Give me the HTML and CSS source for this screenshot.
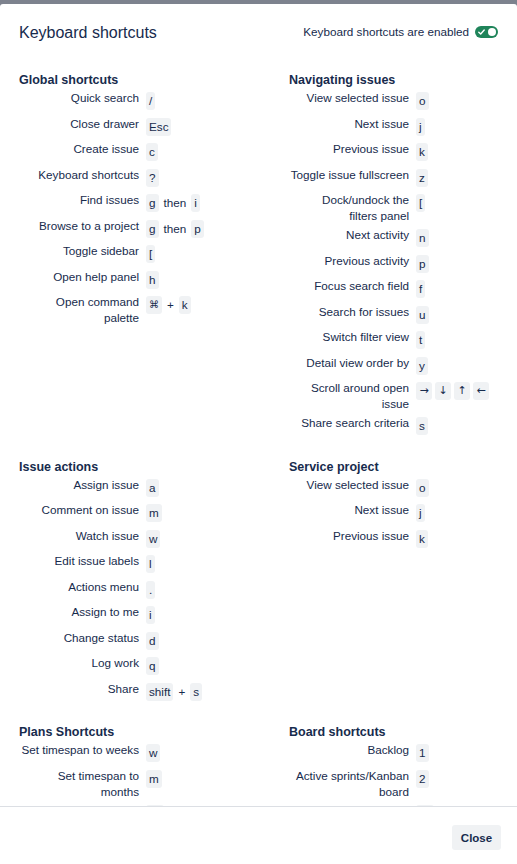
FILE: index.html
```html
<!DOCTYPE html>
<html lang="en">
<head>
<meta charset="utf-8">
<title>Keyboard shortcuts</title>
<link rel="stylesheet" href="styles.css">
</head>
<body>
<div class="modal">
  <header class="modal-header">
    <h1 class="title">Keyboard shortcuts</h1>
    <div class="toggle-wrap">
      <span class="toggle-label">Keyboard shortcuts are enabled</span>
      <span class="toggle">
        <svg class="toggle-check" width="7" height="6" viewBox="0 0 7 6"><path d="M0.8 3.2 L2.7 5 L6.2 1" fill="none" stroke="#fff" stroke-width="1.4" stroke-linecap="round" stroke-linejoin="round"/></svg>
        <span class="knob"></span>
      </span>
    </div>
  </header>
  <div class="modal-body">
    <div class="grid">
      <section class="section">
        <h2>Global shortcuts</h2>
        <div class="row"><div class="label">Quick search</div><div class="keys"><kbd class="key">/</kbd></div></div>
        <div class="row"><div class="label">Close drawer</div><div class="keys"><kbd class="key">Esc</kbd></div></div>
        <div class="row"><div class="label">Create issue</div><div class="keys"><kbd class="key">c</kbd></div></div>
        <div class="row"><div class="label">Keyboard shortcuts</div><div class="keys"><kbd class="key">?</kbd></div></div>
        <div class="row"><div class="label">Find issues</div><div class="keys"><kbd class="key">g</kbd><span class="sep">then</span><kbd class="key">i</kbd></div></div>
        <div class="row"><div class="label">Browse to a project</div><div class="keys"><kbd class="key">g</kbd><span class="sep">then</span><kbd class="key">p</kbd></div></div>
        <div class="row"><div class="label">Toggle sidebar</div><div class="keys"><kbd class="key">[</kbd></div></div>
        <div class="row"><div class="label">Open help panel</div><div class="keys"><kbd class="key">h</kbd></div></div>
        <div class="row"><div class="label">Open command palette</div><div class="keys"><kbd class="key sym">⌘</kbd><span class="sep">+</span><kbd class="key">k</kbd></div></div>
      </section>
      <section class="section">
        <h2>Navigating issues</h2>
        <div class="row"><div class="label">View selected issue</div><div class="keys"><kbd class="key">o</kbd></div></div>
        <div class="row"><div class="label">Next issue</div><div class="keys"><kbd class="key">j</kbd></div></div>
        <div class="row"><div class="label">Previous issue</div><div class="keys"><kbd class="key">k</kbd></div></div>
        <div class="row"><div class="label">Toggle issue fullscreen</div><div class="keys"><kbd class="key">z</kbd></div></div>
        <div class="row"><div class="label">Dock/undock the<br>filters panel</div><div class="keys"><kbd class="key">[</kbd></div></div>
        <div class="row"><div class="label">Next activity</div><div class="keys"><kbd class="key">n</kbd></div></div>
        <div class="row"><div class="label">Previous activity</div><div class="keys"><kbd class="key">p</kbd></div></div>
        <div class="row"><div class="label">Focus search field</div><div class="keys"><kbd class="key">f</kbd></div></div>
        <div class="row"><div class="label">Search for issues</div><div class="keys"><kbd class="key">u</kbd></div></div>
        <div class="row"><div class="label">Switch filter view</div><div class="keys"><kbd class="key">t</kbd></div></div>
        <div class="row"><div class="label">Detail view order by</div><div class="keys"><kbd class="key">y</kbd></div></div>
        <div class="row"><div class="label">Scroll around open issue</div><div class="keys"><kbd class="key arrow">→</kbd><kbd class="key arrow">↓</kbd><kbd class="key arrow">↑</kbd><kbd class="key arrow">←</kbd></div></div>
        <div class="row"><div class="label">Share search criteria</div><div class="keys"><kbd class="key">s</kbd></div></div>
      </section>
      <section class="section">
        <h2>Issue actions</h2>
        <div class="row"><div class="label">Assign issue</div><div class="keys"><kbd class="key">a</kbd></div></div>
        <div class="row"><div class="label">Comment on issue</div><div class="keys"><kbd class="key">m</kbd></div></div>
        <div class="row"><div class="label">Watch issue</div><div class="keys"><kbd class="key">w</kbd></div></div>
        <div class="row"><div class="label">Edit issue labels</div><div class="keys"><kbd class="key">l</kbd></div></div>
        <div class="row"><div class="label">Actions menu</div><div class="keys"><kbd class="key">.</kbd></div></div>
        <div class="row"><div class="label">Assign to me</div><div class="keys"><kbd class="key">i</kbd></div></div>
        <div class="row"><div class="label">Change status</div><div class="keys"><kbd class="key">d</kbd></div></div>
        <div class="row"><div class="label">Log work</div><div class="keys"><kbd class="key">q</kbd></div></div>
        <div class="row"><div class="label">Share</div><div class="keys"><kbd class="key">shift</kbd><span class="sep">+</span><kbd class="key">s</kbd></div></div>
      </section>
      <section class="section">
        <h2>Service project</h2>
        <div class="row"><div class="label">View selected issue</div><div class="keys"><kbd class="key">o</kbd></div></div>
        <div class="row"><div class="label">Next issue</div><div class="keys"><kbd class="key">j</kbd></div></div>
        <div class="row"><div class="label">Previous issue</div><div class="keys"><kbd class="key">k</kbd></div></div>
      </section>
      <section class="section">
        <h2>Plans Shortcuts</h2>
        <div class="row"><div class="label">Set timespan to weeks</div><div class="keys"><kbd class="key">w</kbd></div></div>
        <div class="row"><div class="label">Set timespan to months</div><div class="keys"><kbd class="key">m</kbd></div></div>
        <div class="row"><div class="label"></div><div class="keys"><kbd class="key blank"></kbd></div></div>
      </section>
      <section class="section">
        <h2>Board shortcuts</h2>
        <div class="row"><div class="label">Backlog</div><div class="keys"><kbd class="key">1</kbd></div></div>
        <div class="row"><div class="label">Active sprints/Kanban board</div><div class="keys"><kbd class="key">2</kbd></div></div>
        <div class="row"><div class="label"></div><div class="keys"><kbd class="key blank"></kbd></div></div>
      </section>
    </div>
  </div>
  <footer class="modal-footer">
    <button class="btn" type="button">Close</button>
  </footer>
</div>
</body>
</html>
```
FILE: styles.css
```css
html, body {
  margin: 0;
  height: 100%;
}

body {
  background: #7d828e;
  font-family: "Liberation Sans", Arial, "DejaVu Sans", sans-serif;
  color: #172b4d;
  overflow: hidden;
}

.modal {
  margin-top: 4px;
  height: calc(100vh - 4px);
  background: #ffffff;
  border-radius: 3px 3px 0 0;
  display: flex;
  flex-direction: column;
}

.modal-header {
  display: flex;
  justify-content: space-between;
  align-items: center;
  padding: 19px 19px 0;
  height: 20px;
  flex: none;
}

.title {
  margin: 0;
  font-size: 16px;
  font-weight: 400;
  line-height: 20px;
  color: #172b4d;
}

.toggle-wrap {
  display: flex;
  align-items: center;
  gap: 6px;
  margin-top: -2px;
}

.toggle-label {
  font-size: 11.7px;
  line-height: 16px;
}

.toggle {
  position: relative;
  width: 23px;
  height: 12px;
  border-radius: 6px;
  background: #1f845a;
  display: inline-block;
}

.toggle-check {
  position: absolute;
  left: 3px;
  top: 3px;
}

.knob {
  position: absolute;
  right: 2px;
  top: 2px;
  width: 8px;
  height: 8px;
  border-radius: 50%;
  background: #ffffff;
}

.modal-body {
  flex: 1;
  overflow: hidden;
  padding: 29px 19px 0;
}

.grid {
  display: grid;
  grid-template-columns: 270px 1fr;
  row-gap: 21px;
}

.section {
  display: flex;
  flex-direction: column;
  gap: 3px;
}

.section h2 {
  margin: 0 0 -1px;
  font-size: 12.5px;
  line-height: 16px;
  font-weight: 700;
  color: #172b4d;
}

.row {
  display: flex;
  gap: 7px;
  min-height: 22.5px;
}

.label {
  width: 120px;
  flex: none;
  text-align: right;
  font-size: 11.7px;
  line-height: 16px;
}

.keys {
  display: flex;
  align-items: center;
  gap: 3px;
  padding-top: 2px;
  height: 18px;
}

.key {
  display: inline-block;
  background: #f0f2f4;
  border-radius: 3px;
  padding: 0 3px;
  font-family: "Liberation Sans", Arial, "DejaVu Sans", sans-serif;
  font-size: 11.7px;
  line-height: 18px;
  height: 18px;
  color: #172b4d;
}

.key.blank {
  width: 12px;
}

.key.sym {
  font-family: "DejaVu Sans", sans-serif;
  font-size: 10px;
  padding: 0 3px;
}

.key.arrow {
  font-family: "DejaVu Sans", sans-serif;
  font-size: 11px;
  width: 12px;
  text-align: center;
  padding: 0 2px;
}

.sep {
  margin: 0 2px;
  font-size: 11.7px;
  line-height: 18px;
}

.modal-footer {
  flex: none;
  border-top: 1px solid #dcdfe4;
  padding: 18px 16px 14px;
  display: flex;
  justify-content: flex-end;
}

.btn {
  width: 49px;
  height: 25px;
  border: none;
  border-radius: 3px;
  background: #f0f2f4;
  color: #172b4d;
  font-family: "Liberation Sans", Arial, sans-serif;
  font-size: 11.5px;
  font-weight: 700;
  padding: 0;
}
```
